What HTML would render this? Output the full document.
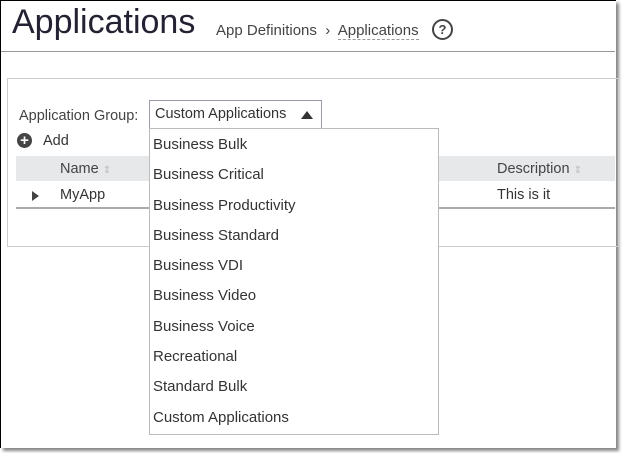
<!DOCTYPE html>
<html><head><style>
body{margin:0;width:627px;height:453px;background:#fff;position:relative;overflow:hidden;font-family:"Liberation Sans",sans-serif;color:#333}
.a{position:absolute;white-space:nowrap}
</style></head><body>
<div class="a" style="left:0;top:0;width:615px;height:447px;border-left:1px solid #000;border-top:1px solid #000;background:#fff;box-shadow:3px 3px 3px #888"></div>
<div class="a" style="left:12px;top:3px;font-size:34px;color:#223;">Applications</div>
<div class="a" style="left:216px;top:22px;font-size:15px;color:#444">App Definitions &nbsp;›&nbsp; <span style="border-bottom:1px dashed #999">Applications</span></div>
<div class="a" style="left:432px;top:19px;width:17px;height:17px;border:2px solid #444;border-radius:50%;font-size:13px;font-weight:bold;text-align:center;line-height:17px;color:#444">?</div>
<div class="a" style="left:1px;top:51px;width:614px;height:1px;background:#999"></div>
<div class="a" style="left:7px;top:78px;width:610px;height:167px;border:1px solid #ccc"></div>
<div class="a" style="left:19px;top:108px;font-size:14.5px;color:#444">Application Group:</div>
<div class="a" style="left:149px;top:100px;width:171px;height:27px;border:1px solid #99a;background:#fff"></div>
<div class="a" style="left:155px;top:106px;font-size:14.5px;color:#333">Custom Applications</div>
<div class="a" style="left:301px;top:111px;width:0;height:0;border-left:6px solid transparent;border-right:6px solid transparent;border-bottom:8px solid #333"></div>
<div class="a" style="left:17px;top:133px;width:15px;height:15px;border-radius:50%;background:#444;color:#fff;font-size:15px;font-weight:bold;text-align:center;line-height:15px">+</div>
<div class="a" style="left:43px;top:133px;font-size:14.5px">Add</div>
<div class="a" style="left:16px;top:156px;width:599px;height:25px;background:#e6e8ea"></div>
<div class="a" style="left:60px;top:161px;font-size:14.5px;color:#444">Name <span style="color:#bbb;font-size:10px">⇕</span></div>
<div class="a" style="left:497px;top:161px;font-size:14.5px;color:#444">Description <span style="color:#bbb;font-size:10px">⇕</span></div>
<div class="a" style="left:32px;top:191px;width:0;height:0;border-top:5px solid transparent;border-bottom:5px solid transparent;border-left:7px solid #444"></div>
<div class="a" style="left:60px;top:187px;font-size:14.5px">MyApp</div>
<div class="a" style="left:497px;top:187px;font-size:14.5px">This is it</div>
<div class="a" style="left:16px;top:207px;width:599px;height:2px;background:#aaa"></div>
<div class="a" style="left:149px;top:128px;width:288px;height:305px;border:1px solid #bbb;background:#fff;font-size:15px;color:#333">
<div style="position:absolute;left:3px;top:1px;line-height:30.3px">Business Bulk<br>Business Critical<br>Business Productivity<br>Business Standard<br>Business VDI<br>Business Video<br>Business Voice<br>Recreational<br>Standard Bulk<br>Custom Applications</div>
</div>
</body></html>
